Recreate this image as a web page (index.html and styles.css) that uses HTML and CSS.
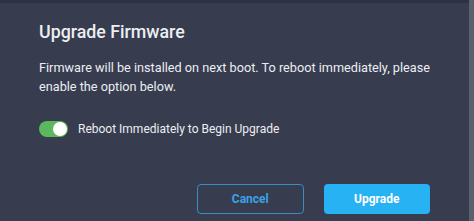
FILE: index.html
```html
<!DOCTYPE html>
<html lang="en">
<head>
    <meta charset="UTF-8">
    <meta name="viewport" content="width=device-width, initial-scale=1.0">
    <title>Upgrade Firmware</title>
    <link rel="stylesheet" href="styles.css">
</head>
<body>
    <div class="dialog">
        <h2 class="title">Upgrade Firmware</h2>
        <p class="message">Firmware will be installed on next boot. To reboot immediately, please enable the option below.</p>

        <label class="toggle-row">
            <span class="toggle on"><span class="knob"></span></span>
            <span>Reboot Immediately to Begin Upgrade</span>
        </label>

        <div class="actions">
            <button class="btn cancel">Cancel</button>
            <button class="btn primary">Upgrade</button>
        </div>
    </div>
</body>
</html>
```

FILE: styles.css
```css
body {
    font-family: Roboto, "Liberation Sans", sans-serif;
    background-color: #5c6170;
    margin: 0;
    padding: 0;
}
.dialog {
    width: 469px;
    height: 221px;
    box-sizing: border-box;
    background-color: #373c4f;
    border-top: 3px solid #2d3243;
    padding: 17px 39px 0;
    color: #eceef2;
}
.title {
    margin: 0;
    font-size: 17.8px;
    font-weight: 500;
    line-height: 24px;
}
.message {
    margin: 14px 0 0;
    font-size: 12.7px;
    line-height: 19px;
}
.toggle-row {
    display: flex;
    align-items: center;
    gap: 10px;
    margin-top: 25px;
    font-size: 12px;
}
.toggle {
    width: 29px;
    height: 16px;
    border-radius: 8px;
    background-color: #5cb85c;
    position: relative;
    display: block;
}
.toggle .knob {
    position: absolute;
    top: 1px;
    right: 1px;
    width: 14px;
    height: 14px;
    border-radius: 50%;
    background-color: #ffffff;
}
.actions {
    display: flex;
    gap: 20px;
    margin: 47px 0 0 158px;
}
.btn {
    width: 108px;
    height: 30px;
    border-radius: 4px;
    font-family: Roboto, "Liberation Sans", sans-serif;
    font-size: 12px;
    font-weight: bold;
    cursor: pointer;
}
.cancel {
    background: transparent;
    border: 1px solid #3b8cc4;
    color: #3ba3e6;
}
.primary {
    background-color: #27b2f4;
    border: none;
    color: #ffffff;
}
```
